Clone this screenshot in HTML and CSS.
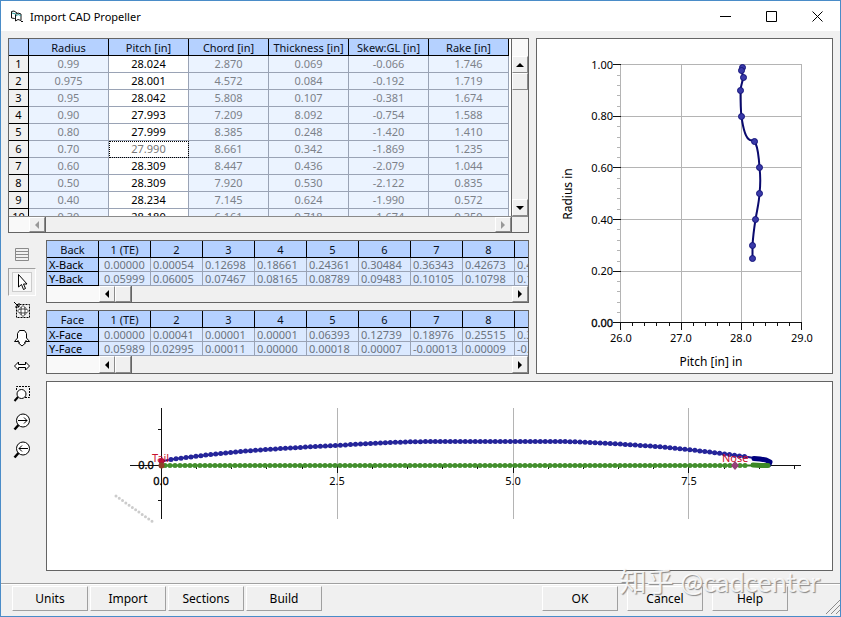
FILE: index.html
```html
<!DOCTYPE html>
<html lang="en">
<head>
    <meta charset="UTF-8">
    <meta name="viewport" content="width=device-width, initial-scale=1.0">
    <title>Import CAD Propeller</title>
    <link rel="stylesheet" href="styles.css">
</head>
<body>

    <div class="window">
        <header class="titlebar">
            <svg class="app-icon" width="14" height="13" viewBox="0 0 14 13">
                <path d="M1.500 1.500L4 1L7 3V10L4.500 8.500L1.500 8Z" fill="#fff" stroke="#111"/>
                <path d="M5.500 4.500L8 3L11 4V10.500L8 9.500L5.500 11Z" fill="#fff" stroke="#111"/>
                <path d="M2 3L6 4M6 6L8 4.500L11 5.500" fill="none" stroke="#2a9a9a"/>
                <path d="M11 11.500H13" stroke="#111" stroke-width="1"/>
            </svg>
            <h1>Import CAD Propeller</h1>
            <button class="caption-btn" aria-label="Minimize"><svg width="11" height="11"><path d="M0 5.500H11"/></svg></button>
            <button class="caption-btn" aria-label="Maximize"><svg width="11" height="11"><path d="M.5 .5H10.500V10.500H.5Z"/></svg></button>
            <button class="caption-btn" aria-label="Close"><svg width="11" height="11"><path d="M.5 .5L10.500 10.500M10.500 .5L.5 10.500"/></svg></button>
        </header>

        <main class="content">
            <section class="grid-box radial">
                <div class="grid-body">
                    <div class="viewport">
                        <table class="radial-table">
                            <colgroup><col class="col-num"><col span="6"></colgroup>
                            <thead>
                                <tr><th></th><th>Radius</th><th>Pitch [in]</th><th>Chord [in]</th><th>Thickness [in]</th><th>Skew:GL [in]</th><th>Rake [in]</th></tr>
                            </thead>
                            <tbody>
                                <tr><th>1</th><td>0.99</td><td class="edit">28.024</td><td>2.870</td><td>0.069</td><td>-0.066</td><td>1.746</td></tr>
                                <tr><th>2</th><td>0.975</td><td class="edit">28.001</td><td>4.572</td><td>0.084</td><td>-0.192</td><td>1.719</td></tr>
                                <tr><th>3</th><td>0.95</td><td class="edit">28.042</td><td>5.808</td><td>0.107</td><td>-0.381</td><td>1.674</td></tr>
                                <tr><th>4</th><td>0.90</td><td class="edit">27.993</td><td>7.209</td><td>8.092</td><td>-0.754</td><td>1.588</td></tr>
                                <tr><th>5</th><td>0.80</td><td class="edit">27.999</td><td>8.385</td><td>0.248</td><td>-1.420</td><td>1.410</td></tr>
                                <tr><th>6</th><td>0.70</td><td class="edit selected">27.990</td><td>8.661</td><td>0.342</td><td>-1.869</td><td>1.235</td></tr>
                                <tr><th>7</th><td>0.60</td><td class="edit">28.309</td><td>8.447</td><td>0.436</td><td>-2.079</td><td>1.044</td></tr>
                                <tr><th>8</th><td>0.50</td><td class="edit">28.309</td><td>7.920</td><td>0.530</td><td>-2.122</td><td>0.835</td></tr>
                                <tr><th>9</th><td>0.40</td><td class="edit">28.234</td><td>7.145</td><td>0.624</td><td>-1.990</td><td>0.572</td></tr>
                                <tr><th>10</th><td>0.30</td><td class="edit">28.180</td><td>6.161</td><td>0.718</td><td>-1.674</td><td>0.350</td></tr>
                            </tbody>
                        </table>
                    </div>
                    <div class="vscroll">
                        <div class="vscroll-head"></div>
                        <button class="scroll-btn" aria-label="Scroll up"><svg width="8" height="4"><path d="M4 0L8 4H0Z"/></svg></button>
                        <div class="thumb"></div>
                        <div class="track"></div>
                        <button class="scroll-btn" aria-label="Scroll down"><svg width="8" height="4"><path d="M0 0H8L4 4Z"/></svg></button>
                    </div>
                </div>
                <div class="hscroll">
                    <div class="hscroll-head"></div>
                    <button class="scroll-btn" disabled aria-label="Scroll left"><svg width="4" height="8"><path d="M4 0V8L0 4Z"/></svg></button>
                    <div class="track"></div>
                    <button class="scroll-btn" disabled aria-label="Scroll right"><svg width="4" height="8"><path d="M0 0L4 4L0 8Z"/></svg></button>
                    <div class="corner"></div>
                </div>
            </section>

            <nav class="tools">
                <button class="tool-btn" aria-label="Grid">
                    <svg width="18" height="18" viewBox="0 0 18 18"><path d="M2.500 3.500H15.500V15.500H2.500ZM2 6.500H16M2 9.500H16M2 12.500H16" fill="none" stroke="#8a8a8a"/></svg>
                </button>
                <button class="tool-btn pressed" aria-label="Pointer">
                    <svg width="18" height="18" viewBox="0 0 18 18"><path d="M5.500 1.500V14L8.500 11.500L10.500 16.500L12.500 15.500L10.500 11H14Z" fill="#fff" stroke="#000"/></svg>
                </button>
                <button class="tool-btn" aria-label="Pan">
                    <svg width="18" height="18" viewBox="0 0 18 18">
                        <path d="M3.500 3.500H16.500V16.500H3.500Z" fill="none" stroke="#000" stroke-dasharray="2 1"/>
                        <path d="M10 4.500L12.500 7H11V9H13V7.500L15.500 10L13 12.500V11H11V13H12.500L10 15.500L7.500 13H9V11H7V12.500L4.500 10L7 7.500V9H9V7H7.500Z" fill="#fff" stroke="#000" stroke-width=".7"/>
                        <path d="M1 1L6 6M6 2V6H2" fill="none" stroke="#000"/>
                    </svg>
                </button>
                <button class="tool-btn" aria-label="Rotate">
                    <svg width="18" height="18" viewBox="0 0 18 18"><path d="M6.500 1.500H11.500L13.500 4.500V9L16.500 12.500H13V11.500L11.500 14H12.500L9 17L5.500 14H6.500L5 11.500V12.500H1.500L4.500 9V4.500Z" fill="#fff" stroke="#000"/></svg>
                </button>
                <button class="tool-btn" aria-label="Stretch">
                    <svg width="18" height="18" viewBox="0 0 18 18"><path d="M1.500 9L5.500 5V7.500H12.500V5L16.500 9L12.500 13V10.500H5.500V13Z" fill="#fff" stroke="#000"/></svg>
                </button>
                <button class="tool-btn" aria-label="Zoom window">
                    <svg width="18" height="18" viewBox="0 0 18 18">
                        <path d="M3.500 5V1.500H16.500V12.500H12" fill="none" stroke="#000" stroke-dasharray="2 1"/>
                        <circle cx="8.500" cy="9" r="4.500" fill="#fff" stroke="#000"/><path d="M5 12L1.500 16" stroke="#000" stroke-width="2"/>
                    </svg>
                </button>
                <button class="tool-btn" aria-label="Zoom next">
                    <svg width="18" height="18" viewBox="0 0 18 18">
                        <circle cx="10" cy="7.500" r="6.500" fill="#fff" stroke="#000"/><path d="M5 7.500H14M11 4.500L14 7.500L11 10.500" fill="none" stroke="#000"/><path d="M5.500 12L1.500 16.500" stroke="#000" stroke-width="2.500"/>
                    </svg>
                </button>
                <button class="tool-btn" aria-label="Zoom previous">
                    <svg width="18" height="18" viewBox="0 0 18 18">
                        <circle cx="10" cy="7.500" r="6.500" fill="#fff" stroke="#000"/><path d="M6 7.500H15M9 4.500L6 7.500L9 10.500" fill="none" stroke="#000"/><path d="M5.500 12L1.500 16.500" stroke="#000" stroke-width="2.500"/>
                    </svg>
                </button>
            </nav>

            <section class="sections">
                <div class="grid-box">
                    <div class="viewport-row">
                        <table class="section-table">
                            <thead>
                                <tr><th>Back</th><th>1 (TE)</th><th>2</th><th>3</th><th>4</th><th>5</th><th>6</th><th>7</th><th>8</th><th></th></tr>
                            </thead>
                            <tbody>
                                <tr><th>X-Back</th><td>0.00000</td><td>0.00054</td><td>0.12698</td><td>0.18661</td><td>0.24361</td><td>0.30484</td><td>0.36343</td><td>0.42673</td><td>0.4</td></tr>
                                <tr><th>Y-Back</th><td>0.05999</td><td>0.06005</td><td>0.07467</td><td>0.08165</td><td>0.08789</td><td>0.09483</td><td>0.10105</td><td>0.10798</td><td>0.1</td></tr>
                            </tbody>
                        </table>
                    </div>
                    <div class="hscroll">
                        <div class="hscroll-label"></div>
                        <button class="scroll-btn" aria-label="Scroll left"><svg width="4" height="8"><path d="M4 0V8L0 4Z"/></svg></button>
                        <div class="thumb"></div>
                        <div class="track"></div>
                        <button class="scroll-btn" aria-label="Scroll right"><svg width="4" height="8"><path d="M0 0L4 4L0 8Z"/></svg></button>
                    </div>
                </div>
                <div class="grid-box face">
                    <div class="viewport-row">
                        <table class="section-table">
                            <thead>
                                <tr><th>Face</th><th>1 (TE)</th><th>2</th><th>3</th><th>4</th><th>5</th><th>6</th><th>7</th><th>8</th><th></th></tr>
                            </thead>
                            <tbody>
                                <tr><th>X-Face</th><td>0.00000</td><td>0.00041</td><td>0.00001</td><td>0.00001</td><td>0.06393</td><td>0.12739</td><td>0.18976</td><td>0.25515</td><td>0.3</td></tr>
                                <tr><th>Y-Face</th><td>0.05989</td><td>0.02995</td><td>0.00011</td><td>0.00000</td><td>0.00018</td><td>0.00007</td><td>-0.00013</td><td>0.00009</td><td>-0.</td></tr>
                            </tbody>
                        </table>
                    </div>
                    <div class="hscroll">
                        <div class="hscroll-label"></div>
                        <button class="scroll-btn" aria-label="Scroll left"><svg width="4" height="8"><path d="M4 0V8L0 4Z"/></svg></button>
                        <div class="thumb"></div>
                        <div class="track"></div>
                        <button class="scroll-btn" aria-label="Scroll right"><svg width="4" height="8"><path d="M0 0L4 4L0 8Z"/></svg></button>
                    </div>
                </div>
            </section>

            <section class="chart pitch-chart">
                <svg viewBox="0 0 295 334">
                    <path class="gridline" d="M83.500 25.500H264.500M83.500 77.500H264.500M83.500 128.500H264.500M83.500 180.500H264.500M83.500 232.500H264.500M83.500 25V283M144.500 25V283M204.500 25V283M264.500 25V283"/>
                    <path class="gridline" d="M80 36.500H83M80 46.500H83M80 56.500H83M80 67.500H83M80 87.500H83M80 98.500H83M80 108.500H83M80 118.500H83M80 139.500H83M80 149.500H83M80 159.500H83M80 170.500H83M80 190.500H83M80 201.500H83M80 211.500H83M80 222.500H83M80 242.500H83M80 252.500H83M80 263.500H83M80 273.500H83"/>
                    <path class="axis" d="M76 25.500H84M76 77.500H84M76 128.500H84M76 180.500H84M76 232.500H84M76 283.500H265M83.500 283V291M144.500 283V291M204.500 283V291M264.500 283V291"/>
                    <path class="axis" d="M95.500 283V287M107.500 283V287M119.500 283V287M132.500 283V287M156.500 283V287M168.500 283V287M180.500 283V287M192.500 283V287M216.500 283V287M228.500 283V287M240.500 283V287M252.500 283V287"/>
                    <g text-anchor="end">
                        <text x="76" y="30">1.00</text>
                        <text x="76" y="81">0.80</text>
                        <text x="76" y="133">0.60</text>
                        <text x="76" y="185">0.40</text>
                        <text x="76" y="236">0.20</text>
                        <text class="strong" x="76" y="288">0.00</text>
                    </g>
                    <g text-anchor="middle">
                        <text x="84" y="303">26.0</text>
                        <text x="144" y="303">27.0</text>
                        <text x="204" y="303">28.0</text>
                        <text x="265" y="303">29.0</text>
                        <text class="axis-title" x="174" y="327">Pitch [in] in</text>
                        <text class="axis-title" transform="translate(35 155) rotate(-90)">Radius in</text>
                    </g>
                    <path class="pitch-line" d="M205.500 28.500L204.500 31.500L206.500 38.500C205 44 203.500 48 203.500 52C203.500 61 203.500 70 204.500 77.500C206 89 208 99 213 101C216 102 217 101 218.500 104C221 110 222 120 222.500 128.500C223.500 137 223.500 146 222.500 154.500C222 164 220 171 218.500 180.500C217 190 216 198 215.500 206.500V219.500"/>
                    <g class="pitch-dots">
                        <circle cx="205.500" cy="28.500" r="3"/><circle cx="204.500" cy="31.500" r="3"/><circle cx="206.500" cy="38.500" r="3"/>
                        <circle cx="203.500" cy="51.500" r="3"/><circle cx="204.500" cy="77.500" r="3"/><circle cx="217.500" cy="102.500" r="3"/>
                        <circle cx="222.500" cy="128.500" r="3"/><circle cx="222.500" cy="154.500" r="3"/><circle cx="218.500" cy="180.500" r="3"/>
                        <circle cx="215.500" cy="206.500" r="3"/><circle cx="215.500" cy="219.500" r="3"/>
                    </g>
                </svg>
            </section>

            <section class="chart foil-chart">
                <svg viewBox="0 0 785 188">
                    <path class="gridline" d="M290.500 26V137M466.500 26V137M641.500 26V137"/>
                    <path class="axis" d="M114.500 26V137M83 83.500H754M111 47.500H114M111 118.500H114"/>
                    <path class="axis" d="M149.500 83V87M184.500 83V87M219.500 83V87M255.500 83V87M290.500 83V91M325.500 83V87M360.500 83V87M395.500 83V87M430.500 83V87M466.500 83V91M501.500 83V87M536.500 83V87M571.500 83V87M606.500 83V87M641.500 83V91M677.500 83V87M712.500 83V87M747.500 83V87"/>
                    <!-- back side -->
                    <path class="back-line" d="M116 79L124 77.500C150 74 175 71 200 69C230 66.500 260 65 290 63.500C325 61 360 59.500 390 59.500H513C545 60 580 62.500 610 64.500C640 67 670 71 701 75L707 76"/>
                    <path class="back-dots" d="M124 77.500C150 74 175 71 200 69C230 66.500 260 65 290 63.500C325 61 360 59.500 390 59.500H513C545 60 580 62.500 610 64.500C640 67 670 71 701 75"/>
                    <path class="back-edge" d="M707 76.500L713 77L719 78L723 80L722 82.500"/>
                    <!-- face side -->
                    <path class="face-line" d="M116 83.500H723"/>
                    <path class="face-dots" d="M118 83.500H702"/>
                    <path class="face-edge" d="M706 83L714 83.500H721"/>
                    <path class="gray-dots" d="M69 114L106 140"/>
                    <circle cx="114.500" cy="79" r="3" fill="#b01040"/>
                    <circle cx="114.500" cy="83.500" r="3" fill="#904028"/>
                    <path d="M688 79L692 83.500L688 88L684 83.500Z" fill="#964178"/>
                    <text class="mark" x="105" y="80">Tail</text>
                    <text class="mark" x="675" y="80">Nose</text>
                    <g text-anchor="middle">
                        <text class="strong" x="99" y="87">0.0</text>
                        <text class="strong" x="114" y="103">0.0</text>
                        <text x="290" y="103">2.5</text>
                        <text x="466" y="103">5.0</text>
                        <text x="642" y="103">7.5</text>
                    </g>
                </svg>
            </section>
        </main>

        <footer class="actions">
            <div class="actions-left">
                <button class="action-btn">Units</button>
                <button class="action-btn">Import</button>
                <button class="action-btn">Sections</button>
                <button class="action-btn">Build</button>
            </div>
            <div class="actions-right">
                <button class="action-btn">OK</button>
                <button class="action-btn">Cancel</button>
                <button class="action-btn">Help</button>
            </div>
            <svg class="size-grip" width="14" height="14"><path d="M0 14L14 0M5 14L14 5M10 14L14 10" stroke="#8a8a8a" fill="none"/></svg>
        </footer>

        <div class="watermark">知乎 @cadcenter</div>
    </div>

</body>
</html>
```

FILE: styles.css
```css
* {
    box-sizing: border-box;
}

body {
    margin: 0;
    background: #f0f0f0;
    color: #000;
    font-family: "Noto Sans", "Open Sans", sans-serif;
    font-size: 11px;
}

button {
    padding: 0;
    border: none;
    background: none;
    color: inherit;
    font: inherit;
}

.window {
    position: relative;
    display: flex;
    flex-direction: column;
    min-height: 100vh;
    border: 1px solid #4a8cc8;
}

/* title bar */
.titlebar {
    display: flex;
    align-items: center;
    height: 30px;
    padding-left: 9px;
    background: #fff;
}

.titlebar h1 {
    flex: 1;
    margin: 0 0 0 6px;
    font-size: 11px;
    font-weight: normal;
}

.caption-btn {
    display: flex;
    align-items: center;
    justify-content: center;
    width: 46px;
    height: 28px;
}

.caption-btn path {
    fill: none;
    stroke: #000;
}

/* main layout */
.content {
    display: grid;
    flex: 1;
    grid-template-columns: 31px minmax(0, 1fr) 297px;
    grid-template-rows: auto auto 1fr;
    grid-template-areas:
        "radial radial pitch"
        "tools sections pitch"
        "tools foil foil";
    gap: 7px;
    padding: 7px 7px 12px;
}

.radial {
    grid-area: radial;
}

.tools {
    grid-area: tools;
}

.sections {
    display: grid;
    grid-area: sections;
    gap: 7px;
}

.pitch-chart {
    grid-area: pitch;
}

.foil-chart {
    grid-area: foil;
}

/* data grids */
.grid-box {
    min-width: 0;
    border: 1px solid #646464;
    background: #fff;
}

.grid-body {
    display: flex;
    height: 177px;
}

.viewport {
    flex: 1;
    overflow: hidden;
}

.viewport-row {
    overflow: hidden;
}

table {
    table-layout: fixed;
    border-collapse: separate;
    border-spacing: 0;
    line-height: 16px;
    white-space: nowrap;
}

th, td {
    padding: 0;
    overflow: hidden;
    border-right: 1px solid #9aa3b5;
    border-bottom: 1px solid #9aa3b5;
    text-align: center;
    font-weight: normal;
}

th {
    border-color: #000;
}

thead th {
    height: 17px;
    background: #b5d1ff;
    color: #0a1020;
    line-height: 15px;
}

.radial-table {
    width: 500px;
}

.col-num {
    width: 20px;
}

.radial-table td {
    height: 17px;
    background: #ebf3ff;
    color: #7d828a;
}

.radial-table tbody th {
    background: #f0f0f0;
}

.radial-table td.edit {
    background: #fff;
    color: #000;
}

.radial-table td.selected {
    outline: 1px dotted #000;
    outline-offset: -1px;
    color: #777;
}

.section-table {
    width: 520px;
    line-height: 13px;
}

.section-table tbody th {
    padding-left: 2px;
    background: #b5d1ff;
    text-align: left;
}

.section-table td {
    height: 14px;
    padding-left: 2px;
    background: #dbe9ff;
    color: #6c7480;
    text-align: left;
}

.section-table td:nth-child(2) {
    padding-left: 5px;
}

/* scroll bars */
.vscroll {
    display: flex;
    flex-direction: column;
    width: 17px;
    border-left: 1px solid #646464;
    background: #f0f0f0;
}

.vscroll-head {
    height: 17px;
    background: #f9f9f9;
}

.hscroll {
    display: flex;
    height: 16px;
    background: #f0f0f0;
}

.face .hscroll {
    height: 17px;
}

.radial .hscroll {
    border-top: 1px solid #8a8a8a;
}

.hscroll-head {
    width: 20px;
    background: #f9f9f9;
}

.hscroll-label {
    width: 52px;
    background: #f9f9f9;
}

.corner {
    width: 17px;
    border-left: 1px solid #646464;
}

.track {
    flex: 1;
}

.hscroll .track {
    border-left: 1px solid #646464;
}

.thumb,
.scroll-btn {
    width: 16px;
    border: 1px solid #fff;
    border-right-color: #8a8a8a;
    border-bottom-color: #8a8a8a;
    background: #f0f0f0;
}

.vscroll .thumb,
.vscroll .scroll-btn {
    height: 17px;
}

.scroll-btn {
    display: flex;
    align-items: center;
    justify-content: center;
}

.scroll-btn:disabled path {
    fill: #999;
}

/* toolbar */
.tool-btn {
    display: flex;
    align-items: center;
    justify-content: center;
    width: 28px;
    height: 28px;
}

.tool-btn.pressed {
    border: 1px solid #a0a0a0;
    border-right-color: #fff;
    border-bottom-color: #fff;
    background: #f8f8f8;
    box-shadow: inset 0 0 0 3px #f0f0f0, inset 0 0 0 4px #ccc;
}

/* charts */
.chart {
    border: 1px solid #646464;
    background: #fff;
}

.chart svg {
    display: block;
    width: 100%;
    height: 100%;
}

.chart text {
    font-size: 11px;
}

.chart .axis-title {
    font-size: 12px;
}

.chart .strong {
    stroke: #000;
    stroke-width: .3px;
}

.chart .mark {
    fill: #c8102e;
}

.gridline {
    fill: none;
    stroke: #b4b4b4;
}

.axis {
    fill: none;
    stroke: #111;
}

.pitch-line {
    fill: none;
    stroke: #0a0a6e;
    stroke-width: 2;
}

.pitch-dots circle {
    fill: #3a3aa8;
    stroke: #15157c;
}

.back-line,
.face-line {
    fill: none;
    stroke: #15158a;
    stroke-width: 2;
}

.back-dots,
.face-dots,
.gray-dots {
    fill: none;
    stroke: #25259a;
    stroke-width: 5;
    stroke-linecap: round;
    stroke-dasharray: 0 5;
}

.back-edge,
.face-edge {
    fill: none;
    stroke: #00007e;
    stroke-width: 5;
    stroke-linecap: round;
    stroke-linejoin: round;
}

.face-line {
    stroke: #2f7a1c;
}

.face-dots {
    stroke: #44902e;
}

.face-edge {
    stroke: #3c8826;
}

.gray-dots {
    stroke: #ccc;
    stroke-width: 3;
    stroke-dasharray: 0 4;
}

/* bottom buttons */
.actions {
    position: relative;
    display: flex;
    justify-content: space-between;
    padding: 2px 52px 5px 11px;
    border-top: 1px solid #a0a0a0;
    box-shadow: inset 0 1px #fff;
}

.actions-left,
.actions-right {
    display: flex;
    gap: 2px;
}

.actions-right {
    gap: 9px;
}

.action-btn {
    width: 76px;
    height: 25px;
    border: 1px solid #fff;
    border-right-color: #a0a0a0;
    border-bottom-color: #a0a0a0;
    font-size: 12px;
}

.size-grip {
    position: absolute;
    right: 0;
    bottom: 2px;
}

.watermark {
    position: absolute;
    right: 20px;
    bottom: 18px;
    color: rgba(255, 255, 255, .85);
    font-family: Lato, "Noto Sans CJK SC", sans-serif;
    font-size: 27px;
    line-height: 32px;
    text-shadow: 1px 1px 1px #888;
    pointer-events: none;
}
```
